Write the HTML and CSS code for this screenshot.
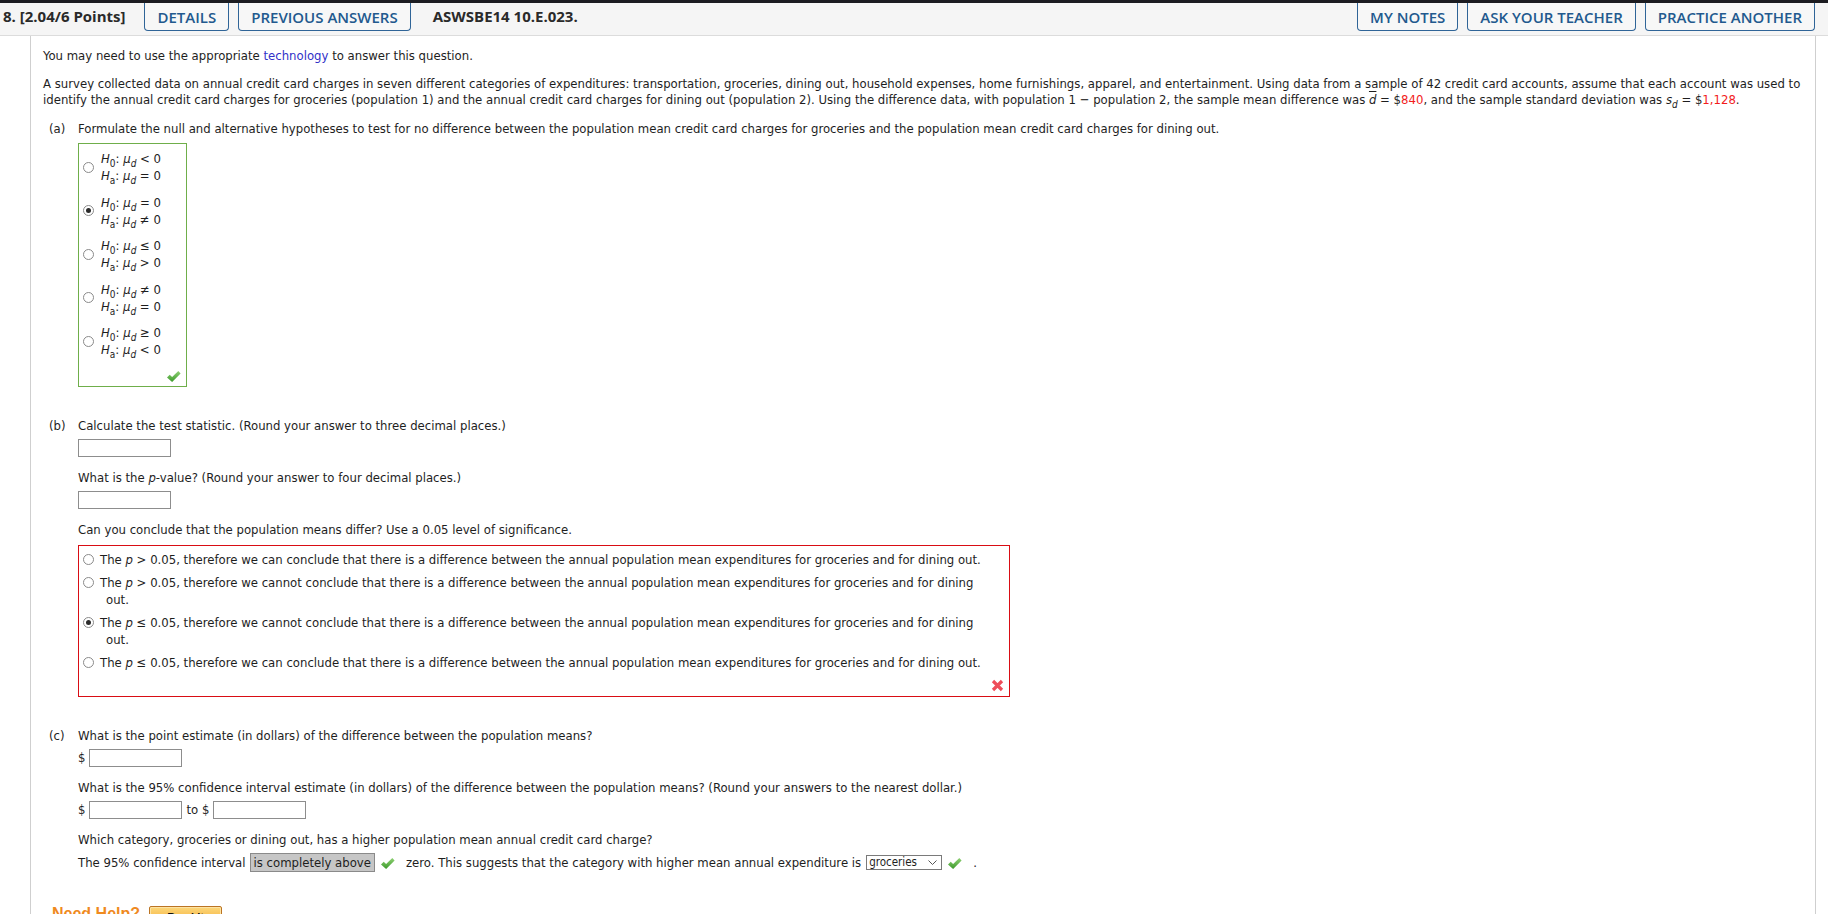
FILE: index.html
```html
<!DOCTYPE html>
<html lang="en">
<head>
    <meta charset="UTF-8">
    <title>ASWSBE14 10.E.023.</title>
    <link rel="stylesheet" href="styles.css">
</head>
<body>

    <!-- Question header -->
    <div class="q-bar">
        <div class="q-group">
            <span class="q-num">8. [2.04/6 Points]</span>
            <button class="tab">DETAILS</button>
            <button class="tab">PREVIOUS ANSWERS</button>
            <span class="q-code">ASWSBE14 10.E.023.</span>
        </div>
        <div class="q-group">
            <button class="tab">MY NOTES</button>
            <button class="tab">ASK YOUR TEACHER</button>
            <button class="tab">PRACTICE ANOTHER</button>
        </div>
    </div>

    <!-- Question body -->
    <div class="q-body">
        <p>You may need to use the appropriate <a href="#" class="link">technology</a> to answer this question.</p>
        <p>A survey collected data on annual credit card charges in seven different categories of expenditures: transportation, groceries, dining out, household expenses, home furnishings, apparel, and entertainment. Using data from a sample of 42 credit card accounts, assume that each account was used to identify the annual credit card charges for groceries (population 1) and the annual credit card charges for dining out (population 2). Using the difference data, with population 1 &minus; population 2, the sample mean difference was <i class="bar">d</i> = $<span class="num">840</span>, and the sample standard deviation was <i>s</i><sub><i>d</i></sub> = $<span class="num">1,128</span>.</p>

        <div class="part">
            <span class="part-label">(a)</span>
            <div class="part-body">
                <p class="ask">Formulate the null and alternative hypotheses to test for no difference between the population mean credit card charges for groceries and the population mean credit card charges for dining out.</p>
                <div class="choices right">
                    <div class="hyp-opt">
                        <span class="radio"></span>
                        <div class="hyp"><i>H</i><sub>0</sub>: <i>&mu;</i><sub><i>d</i></sub> &lt; 0<br><i>H</i><sub>a</sub>: <i>&mu;</i><sub><i>d</i></sub> = 0</div>
                    </div>
                    <div class="hyp-opt">
                        <span class="radio on"></span>
                        <div class="hyp"><i>H</i><sub>0</sub>: <i>&mu;</i><sub><i>d</i></sub> = 0<br><i>H</i><sub>a</sub>: <i>&mu;</i><sub><i>d</i></sub> &ne; 0</div>
                    </div>
                    <div class="hyp-opt">
                        <span class="radio"></span>
                        <div class="hyp"><i>H</i><sub>0</sub>: <i>&mu;</i><sub><i>d</i></sub> &le; 0<br><i>H</i><sub>a</sub>: <i>&mu;</i><sub><i>d</i></sub> &gt; 0</div>
                    </div>
                    <div class="hyp-opt">
                        <span class="radio"></span>
                        <div class="hyp"><i>H</i><sub>0</sub>: <i>&mu;</i><sub><i>d</i></sub> &ne; 0<br><i>H</i><sub>a</sub>: <i>&mu;</i><sub><i>d</i></sub> = 0</div>
                    </div>
                    <div class="hyp-opt">
                        <span class="radio"></span>
                        <div class="hyp"><i>H</i><sub>0</sub>: <i>&mu;</i><sub><i>d</i></sub> &ge; 0<br><i>H</i><sub>a</sub>: <i>&mu;</i><sub><i>d</i></sub> &lt; 0</div>
                    </div>
                    <div class="mark-row">
                        <svg class="ok" viewBox="0 0 15 13"><defs><linearGradient id="okfill" x1="0" y1="0" x2="0" y2="1"><stop offset="0" stop-color="#8fd174"/><stop offset="1" stop-color="#3d9a2c"/></linearGradient></defs><path d="M1 7.4 L3.7 4.8 L6.1 7.1 L12.3 1 L14.6 3.4 L6.1 11.9 Z" fill="url(#okfill)"/></svg>
                    </div>
                </div>
            </div>
        </div>

        <div class="part">
            <span class="part-label">(b)</span>
            <div class="part-body">
                <p class="ask">Calculate the test statistic. (Round your answer to three decimal places.)</p>
                <div class="field"><input type="text" class="ans"></div>
                <p class="ask">What is the <i>p</i>-value? (Round your answer to four decimal places.)</p>
                <div class="field"><input type="text" class="ans"></div>
                <p class="ask">Can you conclude that the population means differ? Use a 0.05 level of significance.</p>
                <div class="choices wrong">
                    <div class="opt">
                        <span class="radio"></span>
                        <span class="opt-text">The <i>p</i> &gt; 0.05, therefore we can conclude that there is a difference between the annual population mean expenditures for groceries and for dining out.</span>
                    </div>
                    <div class="opt">
                        <span class="radio"></span>
                        <span class="opt-text">The <i>p</i> &gt; 0.05, therefore we cannot conclude that there is a difference between the annual population mean expenditures for groceries and for dining out.</span>
                    </div>
                    <div class="opt">
                        <span class="radio on"></span>
                        <span class="opt-text">The <i>p</i> &le; 0.05, therefore we cannot conclude that there is a difference between the annual population mean expenditures for groceries and for dining out.</span>
                    </div>
                    <div class="opt">
                        <span class="radio"></span>
                        <span class="opt-text">The <i>p</i> &le; 0.05, therefore we can conclude that there is a difference between the annual population mean expenditures for groceries and for dining out.</span>
                    </div>
                    <div class="mark-row">
                        <svg class="bad" viewBox="0 0 13 13"><path d="M2 2 L11 11 M11 2 L2 11" stroke="#ee4d59" stroke-width="3.2"/></svg>
                    </div>
                </div>
            </div>
        </div>

        <div class="part">
            <span class="part-label">(c)</span>
            <div class="part-body">
                <p class="ask">What is the point estimate (in dollars) of the difference between the population means?</p>
                <div class="field">$ <input type="text" class="ans"></div>
                <p class="ask">What is the 95% confidence interval estimate (in dollars) of the difference between the population means? (Round your answers to the nearest dollar.)</p>
                <div class="field">$ <input type="text" class="ans"> to $ <input type="text" class="ans"></div>
                <p class="ask">Which category, groceries or dining out, has a higher population mean annual credit card charge?</p>
                <div class="line">The 95% confidence interval <span class="picked">is completely above</span>
                    <svg class="ok inline" viewBox="0 0 15 13"><path d="M1 7.4 L3.7 4.8 L6.1 7.1 L12.3 1 L14.6 3.4 L6.1 11.9 Z" fill="url(#okfill)"/></svg>
                    <span class="after-ok">zero. This suggests that the category with higher mean annual expenditure is</span>
                    <span class="drop">groceries <svg viewBox="0 0 9 5"><path d="M0.5 0.5 L4.5 4.5 L8.5 0.5" fill="none" stroke="#555"/></svg></span>
                    <svg class="ok inline" viewBox="0 0 15 13"><path d="M1 7.4 L3.7 4.8 L6.1 7.1 L12.3 1 L14.6 3.4 L6.1 11.9 Z" fill="url(#okfill)"/></svg>
                    <span class="after-ok">.</span>
                </div>
            </div>
        </div>

        <div class="need-help">
            <span class="need-title">Need Help?</span>
            <button class="read-it">Read It</button>
        </div>
    </div>

</body>
</html>
```

FILE: styles.css
```css
body {
    margin: 0;
    background-color: #fff;
    color: #1e1e1e;
    font-family: "DejaVu Sans Condensed", "DejaVu Sans", sans-serif;
    font-stretch: condensed;
    font-size: 13px;
    overflow: hidden;
}

/* --- Question header --- */
.q-bar {
    display: flex;
    justify-content: space-between;
    height: 32px;
    padding: 0 13px 0 3px;
    background-color: #f5f5f5;
    border-top: 3px solid #1c1c21;
    border-bottom: 1px solid #dcdcdc;
    font-family: "Open Sans", sans-serif;
    font-stretch: normal;
    font-size: 15px;
}
.q-group {
    display: flex;
    align-items: flex-start;
    gap: 9px;
}
.q-num, .q-code {
    line-height: 27px;
    font-weight: 700;
    color: #2a2a2a;
}
.q-num { margin-right: 10px; }
.q-code { margin-left: 13px; }
.tab {
    height: 28px;
    padding: 0 12px;
    background-color: #f7f7f7;
    border: 1px solid #2f6497;
    border-top: none;
    border-radius: 0 0 4px 4px;
    color: #22598e;
    font-family: inherit;
    font-stretch: normal;
    font-size: 15px;
    font-weight: 600;
    cursor: pointer;
}

/* --- Question body --- */
.q-body {
    margin: 0 12px 0 30px;
    min-height: 900px;
    padding: 12px 4px 0 12px;
    border-left: 1px solid #cfcfcf;
    border-right: 1px solid #cfcfcf;
}
.q-body p {
    margin: 0 0 12px 0;
    line-height: 16px;
}
.link { color: #3131c8; text-decoration: none; }
.num { color: #f21c1c; }
.bar { text-decoration: overline; }
sub {
    font-size: 10px;
    line-height: 0;
    vertical-align: -4px;
}

.part {
    display: flex;
    padding-left: 6px;
    margin: 13px 0 31px 0;
    line-height: 16px;
}
.part-label { width: 29px; flex: none; }
.part-body { flex: 1; }
.q-body .ask { margin: 0 0 5px 0; }
.field {
    display: flex;
    align-items: center;
    gap: 4px;
    margin-bottom: 13px;
}
.ans {
    width: 93px;
    height: 18px;
    box-sizing: border-box;
    margin: 0;
    border: 1px solid #8d8d8d;
    border-radius: 0;
    background: #fff;
}

/* --- Choice boxes --- */
.choices {
    box-sizing: border-box;
    display: flex;
    flex-direction: column;
}
.choices.right {
    width: 109px;
    margin-top: 6px;
    padding: 6px 5px 1px 4px;
    border: 1px solid #6fae4a;
}
.choices.wrong {
    width: 932px;
    margin-top: 7px;
    padding: 5px 5px 4px 4px;
    border: 1px solid #d90d14;
}
.radio {
    flex: none;
    width: 11px;
    height: 11px;
    box-sizing: border-box;
    border: 1px solid #8a8a8a;
    border-radius: 50%;
    background: #fff;
    margin-right: 7px;
}
.radio.on::after {
    content: "";
    display: block;
    width: 5px;
    height: 5px;
    margin: 2px;
    border-radius: 50%;
    background: #2b2b2b;
}
.hyp-opt {
    display: flex;
    align-items: center;
    margin-bottom: 9.5px;
}
.hyp { line-height: 17px; white-space: nowrap; }
.hyp-opt:nth-last-child(2) { margin-bottom: 0; }

.opt {
    display: flex;
    align-items: flex-start;
    padding-right: 9px;
    margin-bottom: 6px;
    line-height: 17px;
}
.opt .radio { margin: 3px 6px 0 0; }
.opt-text { padding-left: 6px; text-indent: -6px; }
.opt:nth-last-child(2) { margin-bottom: 0; }

.mark-row {
    display: flex;
    justify-content: flex-end;
    align-items: center;
    height: 18px;
    margin-top: 9px;
}
.choices.wrong .mark-row { height: 14px; margin-top: 7px; }
.ok { width: 15px; height: 13px; }
.bad { width: 13px; height: 13px; }

/* --- Answer line with dropdowns --- */
.line {
    display: flex;
    align-items: center;
    height: 19px;
    margin-top: 5px;
    white-space: nowrap;
}
.picked {
    margin-left: 4px;
    padding: 0 3px;
    height: 19px;
    box-sizing: border-box;
    line-height: 17px;
    background: #c6c6c6;
    border: 1px solid #8a8a8a;
}
.ok.inline { margin: 2px 0 0 5px; }
.after-ok { margin-left: 11px; }
.drop {
    display: inline-flex;
    align-items: center;
    justify-content: space-between;
    width: 76px;
    height: 15px;
    box-sizing: border-box;
    margin-left: 5px;
    padding: 0 4px 0 2px;
    border: 1px solid #7a7a7a;
    font-size: 11.5px;
    line-height: 13px;
}
.drop svg { width: 9px; height: 5px; }

/* --- Help --- */
.need-help {
    display: flex;
    align-items: flex-start;
    gap: 9px;
    padding-left: 9px;
    margin-top: 32px;
}
.need-title {
    color: #ef8a1f;
    font-family: "Liberation Sans", Arial, sans-serif;
    font-stretch: normal;
    font-size: 16px;
    font-weight: 700;
    line-height: 20px;
}
.read-it {
    width: 73px;
    height: 22px;
    margin-top: 2px;
    border: 1px solid #bb7424;
    border-radius: 2px;
    background: linear-gradient(#fcd77a, #f4a62a);
    box-shadow: inset 0 0 0 1px #fde3a2;
    font-family: "Liberation Sans", Arial, sans-serif;
    font-stretch: normal;
    font-size: 11px;
    font-weight: 700;
    color: #111;
}
```
